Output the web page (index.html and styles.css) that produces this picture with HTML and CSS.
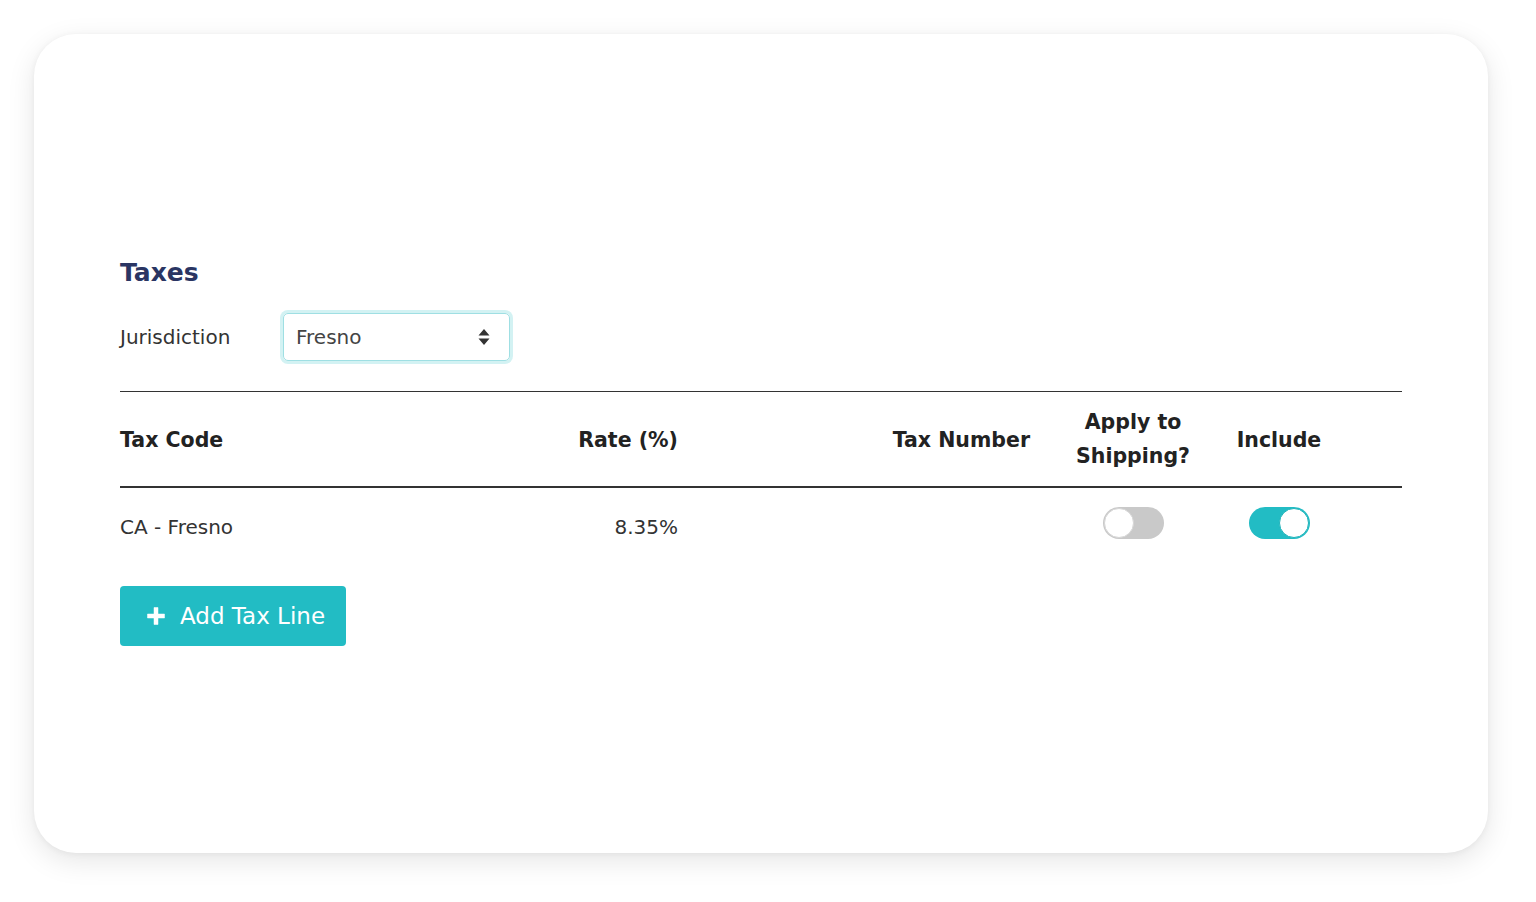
FILE: index.html
```html
<!DOCTYPE html>
<html>
<head>
<meta charset="utf-8">
<link rel="stylesheet" href="styles.css">
</head>
<body>
<div class="card">
  <h2 class="title">Taxes</h2>
  <div class="field">
    <label class="label">Jurisdiction</label>
    <div class="select">
      <span>Fresno</span>
      <svg class="arrows" width="12" height="18" viewBox="0 0 12 18"><path d="M6 1 L11.5 7.5 H0.5 Z M6 17 L11.5 10.5 H0.5 Z" fill="#333"/></svg>
    </div>
  </div>
  <div class="table">
    <div class="row head">
      <div class="c c1">Tax Code</div>
      <div class="c c2">Rate (%)</div>
      <div class="c c3">Tax Number</div>
      <div class="c c4">Apply to<br>Shipping?</div>
      <div class="c c5">Include</div>
      <div class="c c6"></div>
    </div>
    <div class="row body">
      <div class="c c1">CA - Fresno</div>
      <div class="c c2">8.35%</div>
      <div class="c c3"></div>
      <div class="c c4"><span class="toggle"><span class="knob"></span></span></div>
      <div class="c c5"><span class="toggle on"><span class="knob"></span></span></div>
      <div class="c c6"></div>
    </div>
  </div>
  <button class="add"><svg width="20" height="20" viewBox="0 0 20 20"><path d="M8 1.5 H12 V8 H18.5 V12 H12 V18.5 H8 V12 H1.5 V8 H8 Z" fill="#fff" stroke="#fff" stroke-width="0.5" stroke-linejoin="round"/></svg><span>Add Tax Line</span></button>
</div>
</body>
</html>
```
FILE: styles.css
```css
html, body { margin: 0; padding: 0; background: #fff; }
body { padding: 34px 48px 49px 34px; font-family: "DejaVu Sans", Verdana, sans-serif; color: #333; }
.card {
  width: 1454px;
  height: 819px;
  box-sizing: border-box;
  background: #fff;
  border-radius: 42px;
  box-shadow: 0 8px 28px rgba(0,0,0,0.10), 0 1px 6px rgba(0,0,0,0.05);
  padding: 221px 86px 0 86px;
}
.title {
  margin: 0;
  font-family: "DejaVu Sans", Verdana, sans-serif;
  font-weight: bold;
  font-size: 25px;
  line-height: 36px;
  color: #2a3563;
}
.field { display: flex; align-items: center; margin-top: 19px; height: 54px; }
.label { width: 163px; font-size: 20px; color: #333; }
.select {
  width: 227px; height: 48px; box-sizing: border-box;
  border: 1px solid #9fdfe3; border-radius: 5px;
  box-shadow: 0 0 0 3px rgba(34,188,196,0.2);
  display: flex; align-items: center; justify-content: space-between;
  padding: 0 19px 0 12px; font-size: 20px; color: #444;
}
.arrows { display: block; }
.table { margin-top: 27px; width: 1282px; border-top: 1px solid #333; }
.row { display: grid; grid-template-columns: 320px 250px 352px 182px 110px 68px; }
.c { display: flex; align-items: center; }
.head { height: 94px; border-bottom: 2px solid #333; font-family: "DejaVu Sans", Verdana, sans-serif; font-weight: bold; font-size: 20.5px; color: #222; line-height: 34px; }
.body { height: 70px; font-size: 20px; color: #333; }
.c2, .c3 { justify-content: flex-end; padding-right: 12px; }
.c4, .c5 { justify-content: center; text-align: center; }
.body .c1, .body .c2 { padding-top: 8px; }
.head .c1, .head .c2, .head .c3, .head .c5 { padding-top: 2px; }
.toggle {
  width: 61px; height: 32px; border-radius: 16px; background: #c9c9c9;
  position: relative; display: inline-block; box-sizing: border-box;
}
.toggle .knob {
  position: absolute; left: 1px; top: 1px; width: 30px; height: 30px; box-sizing: border-box;
  border-radius: 50%; background: #fff; border: 1px solid #d6d6d6;
}
.toggle.on { background: #22bcc4; }
.toggle.on .knob { left: 30px; border-color: #1fb3ba; }
.add {
  margin-top: 28px;
  width: 226px; height: 60px; border: none; border-radius: 4px;
  background: #22bcc4; color: #fff;
  font-family: "DejaVu Sans", Verdana, sans-serif; font-size: 23px;
  display: flex; align-items: center; gap: 14px; padding: 0 0 0 26px; cursor: pointer;
}
.add svg { display: block; }
```
